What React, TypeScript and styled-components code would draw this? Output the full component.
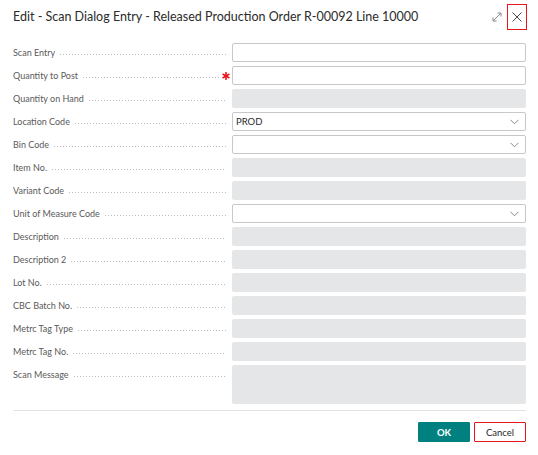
import React from "react";
import styled, { createGlobalStyle } from "styled-components";

const FONT = `"Lato", "Segoe UI", "Noto Sans", sans-serif`;

const Global = createGlobalStyle`
  html, body { margin: 0; padding: 0; background: #ffffff; }
  body { font-family: ${FONT}; }
  * { box-sizing: border-box; }
`;

const Dialog = styled.div`
  width: 538px;
  height: 455px;
  background: #ffffff;
  display: flex;
  flex-direction: column;
  padding: 0 11px 0 13px;
`;

const Header = styled.div`
  height: 31px;
  display: flex;
  align-items: center;
  padding-top: 2px;
`;

const Title = styled.h1`
  flex: 1;
  margin: 0;
  font-size: 12.5px;
  font-weight: 400;
  color: #2b2b2b;
  white-space: nowrap;
`;

const IconButton = styled.button<{ $outlined?: boolean }>`
  width: ${(p) => (p.$outlined ? "20px" : "12px")};
  height: 26px;
  padding: 0;
  margin-left: ${(p) => (p.$outlined ? "4px" : "0")};
  border: 1px solid ${(p) => (p.$outlined ? "#e8161b" : "transparent")};
  background: transparent;
  display: flex;
  align-items: center;
  justify-content: center;
`;

const Form = styled.div`
  display: flex;
  flex-direction: column;
  gap: 4px;
  padding-top: 12px;
  padding-right: 1px;
`;

const Row = styled.div<{ $tall?: boolean }>`
  display: grid;
  grid-template-columns: 219px 1fr;
  height: ${(p) => (p.$tall ? "39px" : "19px")};
`;

const LabelCell = styled.div`
  display: flex;
  align-items: flex-start;
  height: 19px;
  padding-right: 4px;
`;

const LabelText = styled.span`
  font-size: 9px;
  line-height: 19px;
  color: #5a5a5a;
  white-space: nowrap;
`;

const Leader = styled.span`
  flex: 1;
  height: 1px;
  margin: 11px 2px 0 5px;
  background-image: linear-gradient(to right, #bdbdbd 1px, transparent 1px);
  background-size: 3px 1px;
  background-repeat: repeat-x;
`;

const Required = styled.span`
  display: flex;
  align-items: center;
  height: 19px;
  margin-left: 1px;
  margin-right: -2px;
`;

const Field = styled.div<{ $readonly?: boolean }>`
  height: 100%;
  border: 1px solid ${(p) => (p.$readonly ? "#e5e6e7" : "#c8c8c8")};
  background: ${(p) => (p.$readonly ? "#e5e6e7" : "#ffffff")};
  border-radius: 2px;
  display: flex;
  align-items: center;
  padding: 0 6px 0 3px;
  font-size: 9.5px;
  color: #2b2b2b;
`;

const FieldValue = styled.span`
  flex: 1;
`;

const Divider = styled.div`
  height: 1px;
  background: #e3e3e3;
  margin-top: 6px;
  margin-right: 1px;
`;

const Footer = styled.div`
  display: flex;
  justify-content: flex-end;
  gap: 4px;
  padding-top: 11px;
  padding-right: 1px;
`;

const Button = styled.button<{ $primary?: boolean }>`
  width: 52px;
  height: 20px;
  padding: 0;
  border: 1px solid ${(p) => (p.$primary ? "#00817f" : "#e8161b")};
  background: ${(p) => (p.$primary ? "#00817f" : "#ffffff")};
  color: ${(p) => (p.$primary ? "#ffffff" : "#262626")};
  font-family: ${FONT};
  font-size: 9.5px;
  font-weight: ${(p) => (p.$primary ? 700 : 400)};
  border-radius: 1px;
`;

const Chevron = () => (
  <svg width="9" height="6" viewBox="0 0 9 6">
    <path d="M0.5 0.8 L4.5 4.8 L8.5 0.8" fill="none" stroke="#8a8a8a" strokeWidth="1" />
  </svg>
);

const RequiredMark = () => (
  <svg width="8" height="8" viewBox="0 0 8 8">
    <g stroke="#e8161b" strokeWidth="1.6" strokeLinecap="round">
      <path d="M4 0.6 V7.4" />
      <path d="M1.05 2.3 L6.95 5.7" />
      <path d="M6.95 2.3 L1.05 5.7" />
    </g>
  </svg>
);

type F = { label: string; kind: "edit" | "ro" | "select"; value?: string; required?: boolean; tall?: boolean };

const fields: F[] = [
  { label: "Scan Entry", kind: "edit" },
  { label: "Quantity to Post", kind: "edit", required: true },
  { label: "Quantity on Hand", kind: "ro" },
  { label: "Location Code", kind: "select", value: "PROD" },
  { label: "Bin Code", kind: "select" },
  { label: "Item No.", kind: "ro" },
  { label: "Variant Code", kind: "ro" },
  { label: "Unit of Measure Code", kind: "select" },
  { label: "Description", kind: "ro" },
  { label: "Description 2", kind: "ro" },
  { label: "Lot No.", kind: "ro" },
  { label: "CBC Batch No.", kind: "ro" },
  { label: "Metrc Tag Type", kind: "ro" },
  { label: "Metrc Tag No.", kind: "ro" },
  { label: "Scan Message", kind: "ro", tall: true },
];

export default function App() {
  return (
    <>
      <Global />
      <Dialog>
        <Header>
          <Title>Edit - Scan Dialog Entry - Released Production Order R-00092 Line 10000</Title>
          <IconButton aria-label="Expand">
            <svg width="10" height="10" viewBox="0 0 10 10">
              <path d="M1 9 L9 1 M5.5 1 H9 V4.5 M1 5.5 V9 H4.5" fill="none" stroke="#8a8a8a" strokeWidth="1" />
            </svg>
          </IconButton>
          <IconButton $outlined aria-label="Close">
            <svg width="10" height="10" viewBox="0 0 10 10">
              <path d="M0.5 0.5 L9.5 9.5 M9.5 0.5 L0.5 9.5" fill="none" stroke="#4a4a4a" strokeWidth="1" />
            </svg>
          </IconButton>
        </Header>
        <Form>
          {fields.map((f) => (
            <Row key={f.label} $tall={f.tall}>
              <LabelCell>
                <LabelText>{f.label}</LabelText>
                <Leader />
                {f.required && (
                  <Required>
                    <RequiredMark />
                  </Required>
                )}
              </LabelCell>
              <Field $readonly={f.kind === "ro"}>
                <FieldValue>{f.value ?? ""}</FieldValue>
                {f.kind === "select" && <Chevron />}
              </Field>
            </Row>
          ))}
        </Form>
        <Divider />
        <Footer>
          <Button $primary>OK</Button>
          <Button>Cancel</Button>
        </Footer>
      </Dialog>
    </>
  );
}
